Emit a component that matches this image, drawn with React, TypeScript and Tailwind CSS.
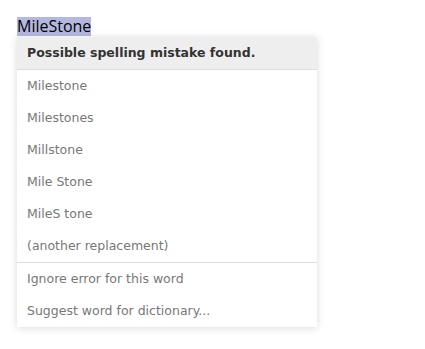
import * as React from "react";

const suggestions = [
  "Milestone",
  "Milestones",
  "Millstone",
  "Mile Stone",
  "MileS tone",
  "(another replacement)",
];

const actions = ["Ignore error for this word", "Suggest word for dictionary..."];

export default function App() {
  return (
    <div className="min-h-[349px] w-[425px] bg-white pl-[17px] pt-[17px]">
      <span className="block w-fit bg-[#b4b8e0] font-['Open_Sans',sans-serif] text-[16px] leading-[19px] text-black">
        MileStone
      </span>
      <div className="mt-[1px] w-[300px] bg-white font-['DejaVu_Sans',Verdana,sans-serif] shadow-[0_1px_8px_rgba(0,0,0,0.15)]">
        <div className="flex h-[33px] items-center border-b border-[#dddddd] bg-[#eeeeee] px-[10px] text-[12.5px] font-bold text-[#333333]">
          Possible spelling mistake found.
        </div>
        <ul>
          {suggestions.map((s) => (
            <li
              key={s}
              className="flex h-[32px] items-center px-[10px] text-[12.5px] text-[#777777]"
            >
              {s}
            </li>
          ))}
        </ul>
        <ul className="border-t border-[#dddddd]">
          {actions.map((s) => (
            <li
              key={s}
              className="flex h-[32px] items-center px-[10px] text-[12.5px] text-[#777777]"
            >
              {s}
            </li>
          ))}
        </ul>
      </div>
    </div>
  );
}
